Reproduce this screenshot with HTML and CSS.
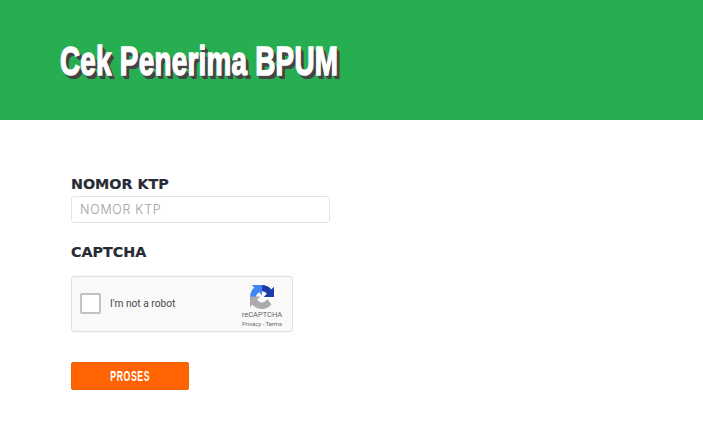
FILE: index.html
```html
<!DOCTYPE html>
<html lang="id">
<head>
<meta charset="utf-8">
<title>Cek Penerima BPUM</title>
<link rel="stylesheet" href="styles.css">
</head>
<body>
<header class="hero">
  <h1 class="hero-title">Cek Penerima BPUM</h1>
</header>
<main class="form">
  <label class="label" for="ktp">NOMOR KTP</label>
  <input class="input" id="ktp" type="text" placeholder="NOMOR KTP">
  <div class="label label-captcha">CAPTCHA</div>
  <div class="captcha">
    <span class="check"></span>
    <span class="robot">I'm not a robot</span>
    <div class="brand">
      <svg class="logo" viewBox="0 0 64 64" width="24" height="24" aria-hidden="true">
        <path d="M64 31.955l-.033-1.37V4.687l-7.16 7.16C50.948 4.674 42.033.093 32.05.093c-10.4 0-19.622 4.96-25.458 12.64l11.736 11.86a15.55 15.55 0 0 1 4.754-5.334c2.05-1.6 4.952-2.906 8.968-2.906.485 0 .86.057 1.135.163 4.976.393 9.288 3.14 11.828 7.124l-8.307 8.307 26.2.004" fill="#1c3aa9"/>
        <path d="M31.95.003l-1.37.033H4.687l7.16 7.16C4.674 13.05.093 21.966.093 31.95c0 10.4 4.96 19.622 12.64 25.458l11.86-11.736a15.55 15.55 0 0 1-5.334-4.754c-1.6-2.05-2.906-4.952-2.906-8.968 0-.485.057-.86.163-1.135.393-4.976 3.14-9.288 7.124-11.828l8.307 8.307L31.95.003" fill="#4285f4"/>
        <path d="M.001 31.955l.033 1.37v25.9l7.16-7.16c5.86 7.173 14.774 11.754 24.76 11.754 10.4 0 19.622-4.96 25.458-12.64L45.677 38.32a15.55 15.55 0 0 1-4.754 5.334c-2.05 1.6-4.952 2.906-8.968 2.906-.485 0-.86-.057-1.135-.163-4.976-.393-9.288-3.14-11.828-7.124l8.307-8.307-26.2.004" fill="#ababab"/>
      </svg>
      <span class="brand-name">reCAPTCHA</span>
      <span class="brand-links">Privacy - Terms</span>
    </div>
  </div>
  <button class="submit" type="button"><span class="submit-text">PROSES</span></button>
</main>
</body>
</html>
```
FILE: styles.css
```css
* { box-sizing: border-box; }
html, body { margin: 0; padding: 0; background: #fff; }
body { width: 703px; height: 440px; overflow: hidden; font-family: "Liberation Sans", Arial, sans-serif; }
.hero {
  height: 120px;
  background: #27ae51;
  padding: 38px 0 0 60px;
}
.hero-title {
  display: inline-block;
  margin: 0;
  font-family: "Liberation Sans", sans-serif;
  font-weight: 700;
  font-size: 40px;
  line-height: 46px;
  letter-spacing: 0.4px;
  white-space: nowrap;
  color: #fff;
  -webkit-text-stroke: 1.5px #fff;
  text-shadow: 1px 1px 0 #444, 2px 2px 0 #444, 3px 3px 0 #444, 4px 4px 0 #444, 5px 4px 0 #444;
  transform: scaleX(0.695);
  transform-origin: left center;
}
.form {
  display: flex;
  flex-direction: column;
  align-items: flex-start;
  padding: 55px 0 0 71px;
}
.label {
  display: block;
  font-family: "DejaVu Sans", "Liberation Sans", sans-serif;
  font-weight: 700;
  font-size: 14.3px;
  line-height: 19px;
  color: #272b35;
  -webkit-text-stroke: 0.2px #272b35;
}
.input {
  display: block;
  width: 259px;
  height: 27px;
  margin-top: 2px;
  padding: 0 9px 0 8px;
  border: 1px solid #e4e4e4;
  border-radius: 3px;
  background: #fff;
  font-family: Inter, "Liberation Sans", sans-serif;
  font-size: 12.5px;
  font-weight: 300;
  letter-spacing: 0.7px;
  outline: none;
}
.input::placeholder { color: #a0a0a0; opacity: 1; }
.label-captcha { margin-top: 20px; }
.captcha {
  display: flex;
  align-items: center;
  width: 222px;
  height: 56px;
  margin-top: 14px;
  padding-left: 8px;
  background: #f9f9f9;
  border: 1px solid #e0e0e0;
  border-radius: 3px;
  box-shadow: 0 0 2px rgba(0,0,0,.06);
}
.check {
  width: 21px;
  height: 21px;
  background: #fff;
  border: 2px solid #c1c1c1;
  border-radius: 2px;
  margin-top: -1px;
}
.robot {
  margin-left: 9px;
  font-family: Roboto, "Liberation Sans", sans-serif;
  font-size: 10.2px;
  color: #4a4a4a;
  margin-top: -1px;
}
.brand {
  display: flex;
  flex-direction: column;
  align-items: center;
  margin-left: auto;
  width: 50px;
  margin-right: 5px;
  padding-top: 8px;
  align-self: flex-start;
  font-family: Roboto, "Liberation Sans", sans-serif;
  color: #666;
}
.logo { display: block; }
.brand-name { font-size: 7.5px; line-height: 9px; margin-top: 1px; }
.brand-links { font-size: 5.9px; line-height: 8px; margin-top: 1px; white-space: nowrap; }
.submit {
  width: 118px;
  height: 28px;
  margin-top: 30px;
  padding: 0;
  border: 1px solid #f06000;
  border-radius: 2px;
  background: #ff6302;
  color: #fff;
  font-family: "Liberation Sans", sans-serif;
  font-weight: 700;
  font-size: 14px;
  letter-spacing: 1px;
  line-height: 26px;
}
.submit-text { display: inline-block; transform: scaleX(0.62); }
```
